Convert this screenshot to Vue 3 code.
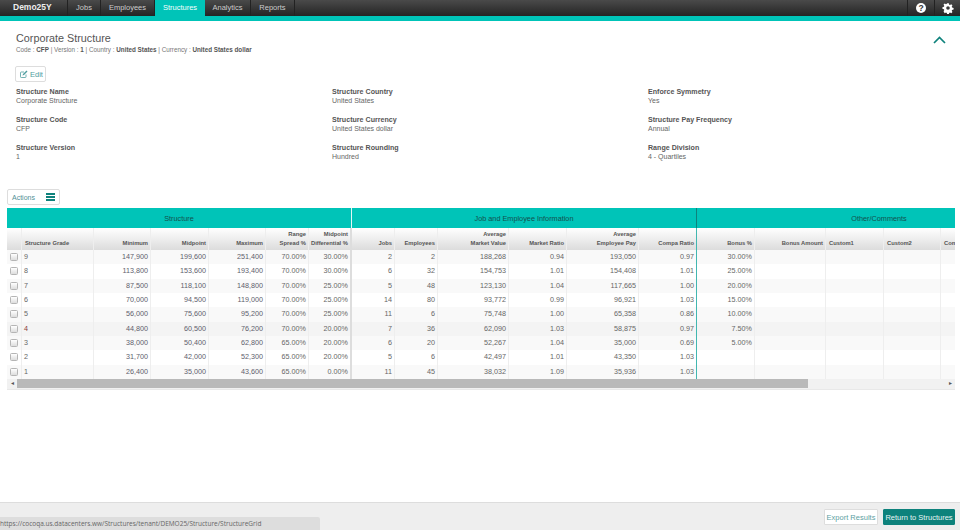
<script setup>
const navItems = [
  { label: 'Jobs', w: 33 },
  { label: 'Employees', w: 54 },
  { label: 'Structures', w: 50, active: true },
  { label: 'Analytics', w: 46 },
  { label: 'Reports', w: 44 }
]
const fields = [
  ['Structure Name', 'Corporate Structure'],
  ['Structure Country', 'United States'],
  ['Enforce Symmetry', 'Yes'],
  ['Structure Code', 'CFP'],
  ['Structure Currency', 'United States dollar'],
  ['Structure Pay Frequency', 'Annual'],
  ['Structure Version', '1'],
  ['Structure Rounding', 'Hundred'],
  ['Range Division', '4 - Quartiles']
]
const headers = [
  { lines: [''], cls: 'c' },
  { lines: ['Structure Grade'], cls: 'l' },
  { lines: ['Minimum'] }, { lines: ['Midpoint'] }, { lines: ['Maximum'] },
  { lines: ['Range', 'Spread %'] },
  { lines: ['Midpoint', 'Differential %'], cls: 'sep' },
  { lines: ['Jobs'] }, { lines: ['Employees'] },
  { lines: ['Average', 'Market Value'] },
  { lines: ['Market Ratio'] },
  { lines: ['Average', 'Employee Pay'] },
  { lines: ['Compa Ratio'], cls: 'teal' },
  { lines: ['Bonus %'] }, { lines: ['Bonus Amount'] },
  { lines: ['Custom1'], cls: 'l' }, { lines: ['Custom2'], cls: 'l' }, { lines: ['Comments'], cls: 'l' }
]
const rows = [
  ['9','147,900','199,600','251,400','70.00%','30.00%','2','2','188,268','0.94','193,050','0.97','30.00%'],
  ['8','113,800','153,600','193,400','70.00%','30.00%','6','32','154,753','1.01','154,408','1.01','25.00%'],
  ['7','87,500','118,100','148,800','70.00%','25.00%','5','48','123,130','1.04','117,665','1.00','20.00%'],
  ['6','70,000','94,500','119,000','70.00%','25.00%','14','80','93,772','0.99','96,921','1.03','15.00%'],
  ['5','56,000','75,600','95,200','70.00%','25.00%','11','6','75,748','1.00','65,358','0.86','10.00%'],
  ['4','44,800','60,500','76,200','70.00%','20.00%','7','36','62,090','1.03','58,875','0.97','7.50%'],
  ['3','38,000','50,400','62,800','65.00%','20.00%','6','20','52,267','1.04','35,000','0.69','5.00%'],
  ['2','31,700','42,000','52,300','65.00%','20.00%','5','6','42,497','1.01','43,350','1.03',''],
  ['1','26,400','35,000','43,600','65.00%','0.00%','11','45','38,032','1.09','35,936','1.03','']
]
const cellClass = (i) => ({ l: i === 0, sep: i === 5, teal: i === 11, link: i >= 1 && i <= 3 })
</script>

<template>
  <div class="page">
    <header class="nav">
      <div class="brand">Demo25Y</div>
      <a v-for="n in navItems" :key="n.label" class="nav-item" :class="{ active: n.active }" :style="{ width: n.w + 'px' }">{{ n.label }}</a>
      <div class="nav-right">
        <span class="nav-icon"><span class="help">?</span></span>
        <span class="nav-icon">
          <svg width="12" height="12" viewBox="0 0 24 24"><path fill="#fff" fill-rule="evenodd" d="M10 0h4l1 3.6 2 .9 3.300-1.800 2.800 2.800-1.800 3.300.9 2 3.800 1.200v4l-3.800 1-.9 2 1.800 3.300-2.800 2.800-3.300-1.800-2 .9-1 3.800h-4l-1-3.800-2-.9-3.300 1.800L.9 20.300l1.800-3.300-.9-2L-2 14v-4l3.800-1.200.9-2L.9 3.500 3.700.7 7 2.500l2-.9zM12 7.500a4.500 4.500 0 1 0 0 9 4.500 4.500 0 0 0 0-9z" transform="translate(2.400 2.400) scale(.8)"/></svg>
        </span>
      </div>
    </header>
    <div class="accent"></div>

    <main class="main">
      <section class="title-row">
        <div>
          <h1>Corporate Structure</h1>
          <p class="meta">Code : <b>CFP</b> | Version : <b>1</b> | Country : <b>United States</b> | Currency : <b>United States dollar</b></p>
        </div>
        <svg class="chevron" width="13" height="8" viewBox="0 0 13 8"><path d="M1 7l5.500-5.500L12 7" fill="none" stroke="#0e827c" stroke-width="1.700"/></svg>
      </section>

      <button class="edit">
        <svg width="8" height="8" viewBox="0 0 16 16"><path d="M12 9v4.500a1.500 1.500 0 0 1-1.500 1.500h-8A1.500 1.500 0 0 1 1 13.500v-8A1.500 1.500 0 0 1 2.500 4H8" fill="none" stroke="#4f9ea0" stroke-width="1.600"/><path d="M6 8l7-7 2 2-7 7-3 1z" fill="#4f9ea0"/></svg>
        Edit
      </button>

      <section class="fields">
        <div v-for="f in fields" :key="f[0]" class="field">
          <div class="f-label">{{ f[0] }}</div>
          <div class="f-value">{{ f[1] }}</div>
        </div>
      </section>

      <button class="actions">
        <span>Actions</span>
        <span class="burger"><i></i><i></i><i></i></span>
      </button>

      <section class="grid-box">
        <div class="grid-clip">
          <div class="grid">
            <div class="group g1">Structure</div>
            <div class="group g2">Job and Employee Information</div>
            <div class="group g3">Other/Comments</div>
            <div v-for="(h, i) in headers" :key="i" class="th" :class="h.cls">
              <span v-for="line in h.lines" :key="line">{{ line }}</span>
            </div>
            <template v-for="(r, ri) in rows" :key="r[0]">
              <div class="td c" :class="'r' + ri"><span class="check"></span></div>
              <div v-for="(v, i) in r" :key="i" class="td" :class="['r' + ri, cellClass(i), { red: ri === 5 && i === 0 }]">{{ v }}</div>
              <div v-for="k in 4" :key="'e' + k" class="td" :class="'r' + ri"></div>
            </template>
          </div>
        </div>
        <div class="scrollbar">
          <span class="arrow">◂</span>
          <span class="thumb"></span>
          <span class="arrow right">▸</span>
        </div>
      </section>
    </main>

    <footer class="foot">
      <button class="btn-light">Export Results</button>
      <button class="btn-teal">Return to Structures</button>
      <div class="status">https://cocoqa.us.datacenters.ww/Structures/tenant/DEMO25/Structure/StructureGrid</div>
    </footer>
  </div>
</template>

<style>
html, body { margin: 0; background: #fff; }
</style>

<style scoped>
.page {
  width: 960px; height: 530px; overflow: hidden; position: relative;
  display: flex; flex-direction: column;
  font-family: "Liberation Sans", Arial, sans-serif; color: #555; background: #fff;
}
.nav {
  height: 16px; flex: none; display: flex; align-items: stretch;
  background: linear-gradient(#4a4a4a, #242424);
}
.brand { width: 68px; box-sizing: border-box; padding-left: 13px; color: #eee; font-weight: 700; font-size: 8.500px; line-height: 15px; border-right: 1px solid #222; }
.nav-item { box-sizing: border-box; text-align: center; color: #ccc; font-size: 7.500px; line-height: 15px; border-right: 1px solid #222; }
.nav-item.active { background: #00c4b8; color: #f4fffe; border-right: none; }
.nav-right { margin-left: auto; display: flex; }
.nav-icon { width: 27px; box-sizing: border-box; display: flex; align-items: center; justify-content: center; border-left: 1px solid #222; }
.nav-icon:last-child { width: 26px; }
.help { width: 10px; height: 10px; border-radius: 50%; background: #fff; color: #333; font-size: 8.500px; font-weight: 700; line-height: 10px; text-align: center; }
.accent { height: 5px; flex: none; background: #00c4b8; }

.main { flex: 1; min-height: 0; padding: 0 5px 0 7px; }
.title-row { display: flex; justify-content: space-between; align-items: flex-start; padding: 10px 0 0 9px; height: 35px; box-sizing: border-box; }
h1 { margin: 0; font-size: 10.800px; font-weight: 400; color: #555; line-height: 14px; }
.meta { margin: 1px 0 0; font-size: 6.300px; line-height: 8px; color: #777; }
.meta b { color: #555; }
.chevron { margin: 5px 9px 0 0; }

.edit {
  display: flex; align-items: center; gap: 2px; margin: 10px 0 0 8px; width: 31px; height: 16px; padding: 0 0 0 4px;
  box-sizing: border-box; background: #fff; border: 1px solid #ddd; border-radius: 2px;
  font: 7.500px "Liberation Sans", Arial, sans-serif; color: #4f9ea0;
}
.fields { display: grid; grid-template-columns: 316px 316px 300px; grid-auto-rows: 28px; margin: 5px 0 0 9px; height: 102px; }
.field { padding-top: 1px; }
.f-label { font-size: 7.100px; font-weight: 700; color: #555; line-height: 9px; }
.f-value { font-size: 7px; color: #666; line-height: 8px; }

.actions {
  display: flex; align-items: center; justify-content: space-between; width: 53px; height: 16px; padding: 0 4px 0 4px;
  box-sizing: border-box; background: #fff; border: 1px solid #ddd; border-radius: 2px;
  font: 7px "Liberation Sans", Arial, sans-serif; color: #4f8f96; margin-top: 0;
}
.burger { display: flex; flex-direction: column; gap: 1.500px; width: 9px; }
.burger i { height: 1.700px; background: #0e827c; display: block; }

.grid-box { margin-top: 3px; width: 948px; }
.grid-clip { overflow: hidden; }
.grid {
  display: grid;
  grid-template-columns: 15px 72px 57px 58px 57px 43px 43px 43px 43px 71px 58px 72px 58px 58px 71px 58px 57px 120px;
  grid-template-rows: 20px 22px repeat(9, 14.330px);
  width: 1065px;
}
.group { background: #00c4b8; color: #14514f; font-size: 7.300px; display: flex; align-items: center; justify-content: center; }
.g1 { grid-column: 1 / span 7; border-right: 1px solid #e4f6f5; }
.g2 { grid-column: 8 / span 6; border-right: 1px solid #0e827c; }
.g3 { grid-column: 14 / span 5; }
.th {
  background: linear-gradient(#fff, #dcdcdc); border-right: 1px solid #eee; box-sizing: border-box;
  display: flex; flex-direction: column; justify-content: flex-end; align-items: flex-end; padding: 0 2px 2px 2px;
  font-size: 5.800px; font-weight: 700; color: #555; line-height: 9px; white-space: nowrap; overflow: hidden;
}
.th.l { align-items: flex-start; padding-left: 3px; }
.th.sep { border-right: 2px solid #ddd; }
.th.teal, .td.teal { border-right: 1px solid #42b7b0; }
.td {
  box-sizing: border-box; border-right: 1px solid #eee; text-align: right; padding: 0 2px;
  font-size: 7.200px; line-height: 14.330px; color: #666; white-space: nowrap; overflow: hidden;
}
.td.l { text-align: left; }
.td.sep { border-right: 2px solid #ddd; }
.td.link { color: #5e5e6c; }
.td.red { color: #8a3a3a; }
.td.c, .th.c { padding: 0; display: flex; align-items: center; justify-content: center; }
.r0, .r2, .r4, .r6, .r8 { background: #f9f9f9; }
.r1, .r3, .r7 { background: #fff; }
.r5 { background: #f4f4f4; }
.check { width: 8px; height: 8px; box-sizing: border-box; border: 1px solid #b5b5b5; border-radius: 1.500px; background: linear-gradient(#fff, #ddd); display: block; }
.scrollbar { height: 10px; background: #f1f1f1; display: flex; align-items: center; border-bottom: 1px solid #e8e8e8; }
.arrow { width: 10px; font-size: 6px; color: #555; text-align: center; line-height: 9px; flex: none; }
.thumb { width: 791px; height: 9px; background: #b9b9b9; flex: none; }
.arrow.right { margin-left: auto; }

.foot {
  height: 28px; flex: none; box-sizing: border-box; background: #eee; border-top: 1px solid #ddd;
  display: flex; justify-content: flex-end; align-items: flex-start; gap: 5px; padding: 6px 5px 0 0; position: relative;
}
.btn-light, .btn-teal { height: 16px; box-sizing: border-box; padding: 0; border-radius: 1px; font: 7.500px "Liberation Sans", Arial, sans-serif; }
.btn-light { width: 54px; background: #fff; border: 1px solid #ddd; color: #5d9fa3; }
.btn-teal { width: 72px; background: #0e827c; border: 1px solid #0e827c; color: #e8f5f4; }
.status {
  position: absolute; left: 0; bottom: 0; width: 320px; height: 13px; box-sizing: border-box; background: #ddd;
  border-radius: 0 2px 0 0; font-size: 6.500px; line-height: 13px; color: #666; white-space: nowrap; font-family: "Open Sans", sans-serif;
}
</style>
